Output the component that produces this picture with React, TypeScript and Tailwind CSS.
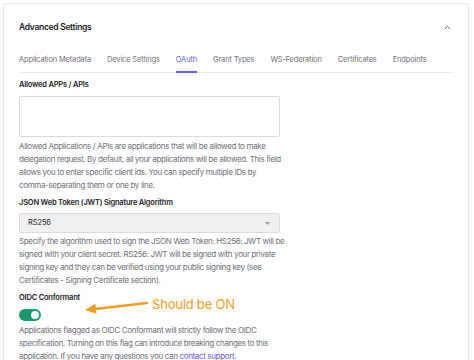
import { ChevronUp } from "lucide-react";

const tabs = [
  "Application Metadata",
  "Device Settings",
  "OAuth",
  "Grant Types",
  "WS-Federation",
  "Certificates",
  "Endpoints",
];

function Help({ lines, children }: { lines?: string[]; children?: React.ReactNode }) {
  return (
    <p className="text-[8px] leading-[13px] tracking-[-0.35px] text-[#6f7178]">
      {lines?.map((l) => (
        <span key={l} className="block whitespace-nowrap">
          {l}
        </span>
      ))}
      {children}
    </p>
  );
}

export default function App() {
  return (
    <div className="relative w-[474px] h-[360px] overflow-hidden bg-white pt-[3px] pl-[3px] font-['Inter',sans-serif]">
      <div className="w-[466px] h-[400px] border border-[#e6e6e6] rounded-[2px] px-[15px]">
        {/* Header */}
        <div className="flex items-center justify-between h-[46px]">
          <h2 className="text-[8.5px] leading-[12px] font-semibold tracking-[-0.3px] text-[#1e212a]">Advanced Settings</h2>
          <ChevronUp className="w-[9px] h-[9px] text-[#555] mr-[1px]" strokeWidth={2.5} />
        </div>

        {/* Tabs */}
        <div className="flex gap-[16px] border-b border-[#ececec] mr-[-1px]">
          {tabs.map((t) => (
            <div
              key={t}
              className={
                t === "OAuth"
                  ? "whitespace-nowrap pt-[4px] pb-[4px] text-[7.5px] leading-[12px] tracking-[-0.16px] text-[#635dff] border-b-2 border-[#635dff] -mb-px"
                  : "whitespace-nowrap pt-[4px] pb-[4px] text-[7.5px] leading-[12px] tracking-[-0.16px] text-[#6f7178] border-b-2 border-transparent"
              }
            >
              {t}
            </div>
          ))}
        </div>

        {/* Allowed APPs */}
        <label className="block mt-[6px] text-[7.5px] font-semibold tracking-[-0.2px] text-[#1e212a] leading-[12px]">
          Allowed APPs / APIs
        </label>
        <div className="mt-[5px] w-[261px] h-[41px] border border-[#dcdcdc] rounded-[2px] bg-white" />
        <div className="mt-[3px]">
          <Help
            lines={[
              "Allowed Applications / APIs are applications that will be allowed to make",
              "delegation request. By default, all your applications will be allowed. This field",
              "allows you to enter specific client ids. You can specify multiple IDs by",
              "comma-separating them or one by line.",
            ]}
          />
        </div>

        {/* JWT */}
        <label className="block mt-[5px] text-[7.5px] font-semibold tracking-[-0.2px] text-[#1e212a] leading-[12px]">
          JSON Web Token (JWT) Signature Algorithm
        </label>
        <div className="mt-[4px] w-[261px] h-[20px] border border-[#dcdcdc] rounded-[2px] bg-[#f0f0f0] flex items-center justify-between pl-[8px] pr-[9px]">
          <span className="text-[7.5px] tracking-[-0.1px] text-[#1e212a]">RS256</span>
          <svg width="5" height="3" viewBox="0 0 5 3">
            <path d="M0 0 H5 L2.5 3 Z" fill="#9a9a9a" />
          </svg>
        </div>
        <div className="mt-[2px]">
          <Help
            lines={[
              "Specify the algorithm used to sign the JSON Web Token: HS256: JWT will be",
              "signed with your client secret. RS256: JWT will be signed with your private",
              "signing key and they can be verified using your public signing key (see",
              "Certificates - Signing Certificate section).",
            ]}
          />
        </div>

        {/* OIDC */}
        <label className="block mt-[5px] text-[7.5px] font-semibold tracking-[-0.2px] text-[#1e212a] leading-[12px]">
          OIDC Conformant
        </label>
        <div className="mt-[5px] w-[22px] h-[12px] rounded-full bg-[#17996b] flex items-center justify-end pr-[2px]">
          <div className="w-[8px] h-[8px] rounded-full bg-white" />
        </div>
        <div className="mt-[3px]">
          <Help
            lines={[
              "Applications flagged as OIDC Conformant will strictly follow the OIDC",
              "specification. Turning on this flag can introduce breaking changes to this",
            ]}
          >
            <span className="block whitespace-nowrap">
              application. If you have any questions you can{" "}
              <span className="text-[#635dff]">contact support</span>.
            </span>
          </Help>
        </div>
      </div>

      {/* Annotation */}
      <svg width="66" height="16" viewBox="0 0 66 16" className="absolute left-[83px] top-[300px]">
        <path d="M64 3 L12 8.9" stroke="#f39c1f" strokeWidth="2.5" fill="none" strokeLinecap="round" />
        <path d="M2 10 L12.3 3.8 L13.5 13.8 Z" fill="#f39c1f" />
      </svg>
      <span className="absolute left-[152px] top-[296px] text-[13px] leading-[16px] tracking-[-0.2px] text-[#f39c1f] whitespace-nowrap">
        Should be ON
      </span>
    </div>
  );
}
